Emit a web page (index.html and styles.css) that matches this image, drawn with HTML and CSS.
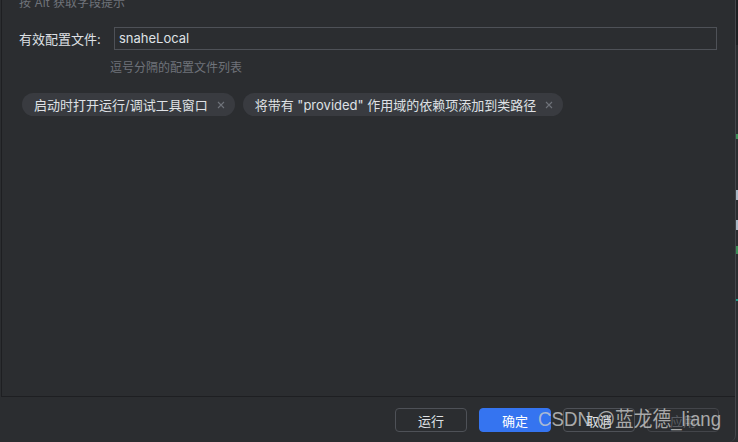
FILE: index.html
```html
<!DOCTYPE html>
<html lang="zh">
<head>
<meta charset="utf-8">
<title>运行配置</title>
<link rel="stylesheet" href="styles.css">
</head>
<body>
<div class="window">
  <div class="dialog">
    <div class="content">
      <div class="tip">按 Alt 获取字段提示</div>
      <div class="field-row">
        <label class="label">有效配置文件:</label>
        <div class="input">snaheLocal</div>
      </div>
      <div class="hint">逗号分隔的配置文件列表</div>
      <div class="chips">
        <span class="chip">启动时打开运行/调试工具窗口<svg class="close" viewBox="0 0 8 8"><path d="M1 1L7 7M7 1L1 7"/></svg></span>
        <span class="chip">将带有 "provided" 作用域的依赖项添加到类路径<svg class="close" viewBox="0 0 8 8"><path d="M1 1L7 7M7 1L1 7"/></svg></span>
      </div>
    </div>
    <div class="footer">
      <button class="btn">运行</button>
      <button class="btn primary">确定</button>
      <button class="btn">取消</button>
      <button class="btn disabled">应用</button>
    </div>
  </div>
  <div class="strip">
    <span class="mark green m1"></span>
    <span class="mark white m2"></span>
    <span class="mark white m3"></span>
    <span class="mark green m4"></span>
    <span class="mark teal m5"></span>
  </div>
  <div class="watermark">CSDN @蓝龙德_liang</div>
</div>
</body>
</html>
```

FILE: styles.css
```css
* { box-sizing: border-box; }
html, body {
  margin: 0;
  padding: 0;
  width: 738px;
  height: 442px;
  overflow: hidden;
  background: #2b2d30;
  font-family: "Inter", "Noto Sans CJK SC", sans-serif;
  color: #dfe1e5;
}
.window {
  position: relative;
  display: flex;
  width: 738px;
  height: 442px;
}
.dialog {
  width: 736px;
  height: 442px;
  display: flex;
  flex-direction: column;
  background: #2b2d30;
  border-right: 1px solid #43454a;
  border-bottom-right-radius: 7px;
}
.content {
  height: 397px;
  margin-left: 1px;
  border-left: 1px solid #1e1f22;
  border-bottom: 1px solid #1e1f22;
  padding: 0 18px 0 17px;
  overflow: hidden;
}
.tip {
  font-size: 12px;
  line-height: 16px;
  margin-top: -5px;
  color: #6f737a;
}
.field-row {
  display: flex;
  align-items: center;
  margin-top: 16px;
}
.label {
  width: 95px;
  font-size: 13px;
  line-height: 16px;
  color: #dfe1e5;
}
.input {
  flex: 1;
  height: 23px;
  border: 1px solid #4e5157;
  padding: 0 4px;
  font-size: 13px;
  line-height: 21px;
  color: #dfe1e5;
}
.hint {
  margin: 10px 0 0 91px;
  font-size: 12px;
  line-height: 16px;
  color: #6f737a;
}
.chips {
  display: flex;
  gap: 8px;
  margin: 17px 0 0 3px;
}
.chip {
  display: inline-flex;
  align-items: center;
  height: 23px;
  padding: 0 10px 0 12px;
  border-radius: 12px;
  background: #393b40;
  font-size: 13px;
  color: #dfe1e5;
  white-space: nowrap;
}
.close {
  width: 8px;
  height: 8px;
  margin-left: 9px;
  stroke: #6f737a;
  stroke-width: 1.1;
  fill: none;
}
.footer {
  flex: 1;
  display: flex;
  justify-content: flex-end;
  align-items: flex-start;
  gap: 12px;
  padding: 11px 16px 0 0;
}
.btn {
  width: 72px;
  height: 24px;
  border: 1px solid #4e5157;
  border-radius: 4px;
  background: transparent;
  color: #dfe1e5;
  font-family: "Inter", "Noto Sans CJK SC", sans-serif;
  font-size: 13px;
  padding: 0;
}
.btn.primary {
  background: #3574f0;
  border-color: #3574f0;
  color: #ffffff;
}
.btn.disabled {
  color: #5a5d63;
  border-color: #43454a;
}
.strip {
  position: relative;
  width: 2px;
  height: 442px;
  background: linear-gradient(#1e1f22 0 45px, #2b2d30 45px);
}
.mark {
  position: absolute;
  left: 0;
  width: 2px;
}
.green { background: #3d8f58; }
.white { background: #a9b7c6; }
.teal { background: #1f9e8c; }
.m1 { top: 134px; height: 5px; }
.m2 { top: 190px; height: 10px; }
.m3 { top: 220px; height: 10px; }
.m4 { top: 246px; height: 8px; }
.m5 { top: 299px; height: 2px; }
.watermark {
  position: absolute;
  left: 538px;
  top: 406px;
  font-family: "Liberation Sans", "Noto Sans CJK SC", sans-serif;
  font-size: 21px;
  line-height: 26px;
  color: rgba(205, 205, 205, 0.78);
  white-space: nowrap;
  transform: scaleX(0.89);
  transform-origin: left center;
}
```
